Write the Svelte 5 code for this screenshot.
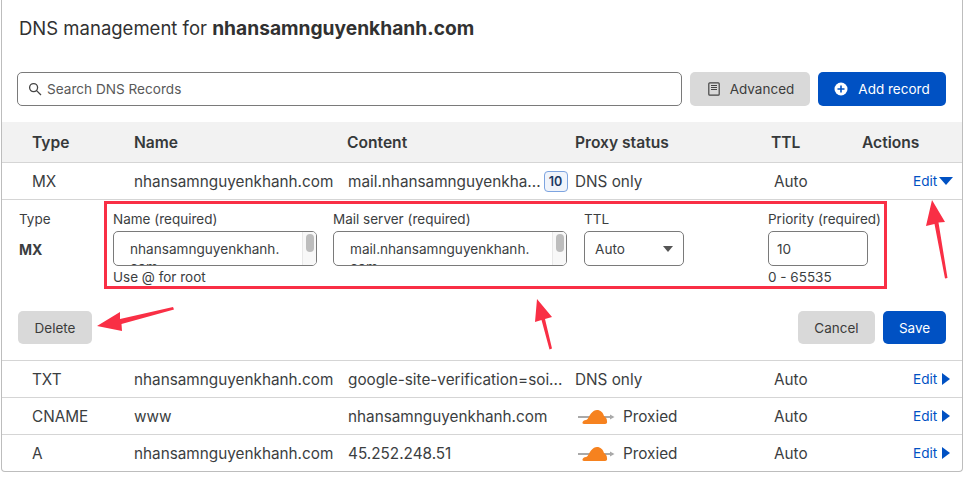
<script>
  const rows = [
    { type: 'TXT', name: 'nhansamnguyenkhanh.com', content: 'google-site-verification=soi...', proxied: false },
    { type: 'CNAME', name: 'www', content: 'nhansamnguyenkhanh.com', proxied: true },
    { type: 'A', name: 'nhansamnguyenkhanh.com', content: '45.252.248.51', proxied: true }
  ];
</script>

<div class="page">
  <main class="card">
    <h1>DNS management for <b>nhansamnguyenkhanh.com</b></h1>
    <div class="toolbar">
      <div class="search">
        <svg width="14" height="14" viewBox="0 0 14 14" fill="none" stroke="#444" stroke-width="1.3"><circle cx="5.6" cy="5.6" r="4"/><path d="M8.6 8.6 13 13"/></svg>
        <span>Search DNS Records</span>
      </div>
      <button class="btn grey adv">
        <svg width="12" height="14" viewBox="0 0 12 14" fill="none" stroke="#444" stroke-width="1.2"><rect x="0.8" y="0.8" width="10.4" height="12.4" rx="1"/><path d="M3 3.500h6M3 5.500h6M3 7.500h6"/></svg>
        Advanced
      </button>
      <button class="btn blue add">
        <svg width="14" height="14" viewBox="0 0 14 14"><circle cx="7" cy="7" r="6.500" fill="#fff"/><path d="M7 3.500v7M3.500 7h7" stroke="#0051c3" stroke-width="1.600"/></svg>
        Add record
      </button>
    </div>

    <div class="row head">
      <div class="c-type">Type</div><div>Name</div><div>Content</div><div>Proxy status</div><div>TTL</div><div>Actions</div>
    </div>

    <div class="row data">
      <div class="c-type">MX</div>
      <div>nhansamnguyenkhanh.com</div>
      <div class="content"><span>mail.nhansamnguyenkha...</span><em>10</em></div>
      <div>DNS only</div>
      <div>Auto</div>
      <a class="edit">Edit<i class="down"></i></a>
    </div>

    <section class="editor">
      <div class="fields">
        <div class="typecol"><span>Type</span><b>MX</b></div>
        <div class="field f-name">
          <label>Name (required)</label>
          <div class="area"><p>nhansamnguyenkhanh.<br>com</p><div class="bar"><i></i></div></div>
          <small>Use @ for root</small>
        </div>
        <div class="field f-mail">
          <label>Mail server (required)</label>
          <div class="area"><p>mail.nhansamnguyenkhanh.<br>com</p><div class="bar"><i></i></div></div>
        </div>
        <div class="field f-ttl">
          <label>TTL</label>
          <div class="select"><span>Auto</span><i></i></div>
        </div>
        <div class="field f-pri">
          <label>Priority (required)</label>
          <div class="input">10</div>
          <small>0 - 65535</small>
        </div>
      </div>
      <div class="actions">
        <button class="btn grey del">Delete</button>
        <div class="right">
          <button class="btn grey cancel">Cancel</button>
          <button class="btn blue save">Save</button>
        </div>
      </div>
    </section>

    {#each rows as r}
      <div class="row data">
        <div class="c-type">{r.type}</div>
        <div>{r.name}</div>
        <div class="content"><span>{r.content}</span></div>
        {#if r.proxied}
          <div class="proxied">
            <svg width="37" height="16" viewBox="0 0 37 16">
              <path d="M0 9h35" stroke="#a9a9a9" stroke-width="1.800"/>
              <path d="M32 6.500 36.500 9 32 11.500z" fill="#a9a9a9"/>
              <path d="M6 16C3.500 16 4 12.500 8 12C10 11.500 11 8 13 5.500C15 3 17 2 19 2C22.500 2 25 4.500 26 8C27 9 29 10 29 13C29.500 15 28.500 16 27 16z" fill="#f6821f"/>
            </svg>
            <span>Proxied</span>
          </div>
        {:else}
          <div>DNS only</div>
        {/if}
        <div>Auto</div>
        <a class="edit">Edit<i class="side"></i></a>
      </div>
    {/each}
  </main>

  <div class="highlight"></div>
  <svg class="arrows" width="967" height="488" viewBox="0 0 967 488" fill="#f92f45">
    <path d="M932 200 945 222 938.500 222.500 947.500 278 945 278.500 934.500 224 926 226z"/>
    <path d="M97 326 120 312 120 319 173 307 174 309.500 121.500 324 122 331z"/>
    <path d="M537 299 552 317 545 319 552 348.500 549.500 349.500 541.500 320 535 322z"/>
  </svg>
</div>

<style>
  :global(body) { margin: 0; background: #fff; }
  .page {
    position: relative;
    width: 967px;
    height: 488px;
    overflow: hidden;
    font-family: Inter, "Liberation Sans", sans-serif;
    color: #3b3e3f;
  }
  .card {
    box-sizing: border-box;
    width: 962px;
    height: 472px;
    margin-left: 1px;
    border: 1px solid #bdbdbd;
    border-top: 0;
    border-radius: 0 0 4px 4px;
    overflow: hidden;
  }
  h1 {
    margin: 0;
    padding: 17px 0 0 17px;
    height: 72px;
    box-sizing: border-box;
    font-size: 18.5px;
    line-height: 22px;
    font-weight: 400;
    color: #313131;
  }
  h1 b { font-weight: 700; font-size: 19.2px; }
  .toolbar {
    display: flex;
    gap: 8px;
    padding: 0 15px;
    height: 50px;
    align-items: flex-start;
  }
  .search {
    box-sizing: border-box;
    width: 665px;
    height: 34px;
    border: 1px solid #7a7a7a;
    border-radius: 5px;
    display: flex;
    align-items: center;
    gap: 5px;
    padding-left: 10px;
    font-size: 13.6px;
    color: #595959;
  }
  .btn {
    box-sizing: border-box;
    height: 34px;
    border: 0;
    border-radius: 5px;
    font: inherit;
    font-size: 13.5px;
    display: inline-flex;
    align-items: center;
    justify-content: center;
    padding: 0;
  }
  .grey { background: #d9d9d9; color: #3c3c3c; }
  .blue { background: #0051c3; color: #fff; }
  .adv { width: 120px; gap: 10px; padding-left: 2px; }
  .add { width: 128px; gap: 10px; }
  .row {
    display: grid;
    align-items: center;
    font-size: 15.3px;
    border-bottom: 1px solid #d5d5d5;
    height: 37px;
    box-sizing: border-box;
  }
  .row > .c-type { padding-left: 30px; }
  .head {
    grid-template-columns: 132px 213px 228px 196px 91px 1fr;
    height: 41px;
    background: #f2f2f2;
    font-weight: 600;
    font-size: 15.6px;
    color: #36393a;
  }
  .content { display: flex; align-items: center; }
  .content em {
    font-style: normal;
    font-weight: 600;
    font-size: 12.5px;
    background: #f0f4fb;
    border: 1px solid #7da4e0;
    border-radius: 4px;
    width: 24px;
    height: 21px;
    box-sizing: border-box;
    display: flex;
    align-items: center;
    justify-content: center;
    margin-left: 3px;
    color: #1d3a63;
  }
  .data { grid-template-columns: 132px 214px 227px 199px 1fr 40px; padding-right: 9px; }
  .data:last-child { border-bottom: 0; height: 36px; }
  .edit {
    color: #0051c3;
    font-size: 13.6px;
    display: flex;
    align-items: center;
    gap: 2px;
  }
  .edit i { display: block; width: 0; height: 0; }
  .down {
    border-left: 7px solid transparent;
    border-right: 7px solid transparent;
    border-top: 8px solid #0051c3;
  }
  .side {
    border-top: 6px solid transparent;
    border-bottom: 6px solid transparent;
    border-left: 8px solid #0051c3;
    margin: 0 0 0 3px;
  }
  .editor {
    box-sizing: border-box;
    height: 161px;
    border-bottom: 1px solid #d5d5d5;
    padding: 0 16px 0 16px;
    display: flex;
    flex-direction: column;
  }
  .fields {
    display: flex;
    height: 111px;
    padding: 10px 0 0 1px;
    box-sizing: border-box;
    font-size: 13.5px;
  }
  .typecol { width: 94px; display: flex; flex-direction: column; }
  .typecol span { line-height: 18px; }
  .typecol b { font-size: 14px; font-weight: 700; margin-top: 13px; line-height: 18px; }
  .field { display: flex; flex-direction: column; }
  .field label { line-height: 18px; height: 21px; font-size: 13.5px; }
  .f-name { width: 204px; margin-right: 16px; }
  .f-mail { width: 234px; margin-right: 17px; }
  .f-ttl { width: 100px; margin-right: 84px; }
  .f-pri { width: 118px; }
  .area, .select, .input {
    box-sizing: border-box;
    height: 35px;
    border: 1px solid #7a7a7a;
    border-radius: 5px;
    background: #fff;
    font-size: 13.6px;
  }
  .area { display: flex; overflow: hidden; }
  .area p { flex: 1; margin: 0; padding: 8px 0 0 16px; line-height: 18px; white-space: nowrap; }
  .bar { width: 14px; background: #f8f8f8; border-left: 1px solid #e8e8e8; box-sizing: border-box; padding: 2px 2px 0 3px; }
  .bar i { display: block; height: 18px; width: 8px; background: #bdbdbd; border-radius: 4px; }
  small { font-size: 13.5px; line-height: 16px; margin-top: 3px; display: block; }
  .select { display: flex; align-items: center; justify-content: space-between; padding: 0 10px 0 10px; }
  .select i { width: 0; height: 0; border-left: 5px solid transparent; border-right: 5px solid transparent; border-top: 6px solid #555; }
  .input { width: 100px; display: flex; align-items: center; padding-left: 8px; }
  .actions { display: flex; justify-content: space-between; }
  .right { display: flex; gap: 8px; }
  .del { width: 74px; height: 33px; }
  .cancel { width: 77px; height: 33px; }
  .save { width: 63px; height: 33px; }
  .proxied { display: flex; align-items: center; gap: 8px; padding-left: 3px; }
  .highlight {
    position: absolute;
    left: 104px;
    top: 201px;
    width: 783px;
    height: 88px;
    box-sizing: border-box;
    border: 3px solid #f92f45;
    pointer-events: none;
  }
  .arrows { position: absolute; left: 0; top: 0; pointer-events: none; }
</style>
